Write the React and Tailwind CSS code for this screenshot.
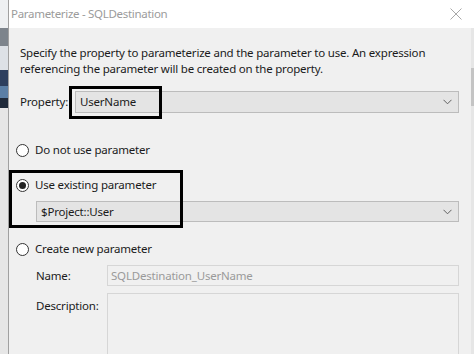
import React from "react";

function Chevron() {
  return (
    <svg width="9" height="6" viewBox="0 0 9 6" className="block">
      <path d="M0.5 0.8 L4.5 4.8 L8.5 0.8" fill="none" stroke="#606060" strokeWidth="1" />
    </svg>
  );
}

function Radio({ checked }) {
  return (
    <div className="w-[13px] h-[13px] rounded-full border border-[#333] bg-white flex items-center justify-center shrink-0">
      {checked && <div className="w-[7px] h-[7px] rounded-full bg-[#222]" />}
    </div>
  );
}

export default function App() {
  return (
    <div className="w-[474px] h-[354px] flex overflow-hidden relative font-['Segoe_UI','Noto_Sans',sans-serif] text-[#1b1b1b]">
      {/* desktop strip */}
      <div className="w-[8px] flex flex-col">
        <div className="h-[28px] bg-[#eef0f2]" />
        <div className="h-[18px] bg-[#7d848c]" />
        <div className="h-[24px] bg-[#dde1e6]" />
        <div className="h-[16px] bg-[#2d3f5e]" />
        <div className="h-[12px] bg-[#5b7fa6]" />
        <div className="h-[10px] bg-[#1f2a3a]" />
        <div className="flex-1 bg-[#e6e6e6]" />
      </div>
      <div className="w-px bg-[#a0a0a0]" />
      {/* dialog */}
      <div className="w-[462px] flex flex-col">
        <div className="h-[28px] bg-white flex items-center justify-between shrink-0">
          <span className="ml-[2px] text-[11.5px] tracking-[-0.3px] text-[#9b9b9b] leading-none">Parameterize - SQLDestination</span>
          <svg width="12" height="12" viewBox="0 0 12 12" className="mr-[9px]">
            <path d="M0.5 0.5 L11.5 11.5 M11.5 0.5 L0.5 11.5" stroke="#a8a8a8" strokeWidth="1" />
          </svg>
        </div>
        <div className="flex-1 bg-[#f0f0f0] flex flex-col text-[11.5px] tracking-[-0.2px] leading-[16px]">
          <p className="ml-[11px] mt-[17px] w-[440px] whitespace-nowrap">
            Specify the property to parameterize and the parameter to use. An expression
            <br />
            referencing the parameter will be created on the property.
          </p>
          <div className="mt-[14px] h-[22px] flex items-center ml-[11px]">
            <span className="w-[55px]">Property:</span>
            <div className="w-[384px] h-[22px] bg-[#e4e4e4] border border-[#bcbcbc] flex items-center justify-between pl-[4px] pr-[6px]">
              <span>UserName</span>
              <Chevron />
            </div>
          </div>
          <div className="mt-[29px] h-[16px] flex items-center ml-[7px] gap-[6px]">
            <Radio />
            <span>Do not use parameter</span>
          </div>
          <div className="mt-[19px] h-[16px] flex items-center ml-[7px] gap-[6px]">
            <Radio checked />
            <span>Use existing parameter</span>
          </div>
          <div className="mt-[8px] ml-[27px] w-[423px] h-[21px] bg-[#e4e4e4] border border-[#bcbcbc] flex items-center justify-between pl-[4px] pr-[6px]">
            <span>$Project::User</span>
            <Chevron />
          </div>
          <div className="mt-[19px] h-[16px] flex items-center ml-[7px] gap-[6px]">
            <Radio />
            <span>Create new parameter</span>
          </div>
          <div className="mt-[8px] ml-[27px] h-[21px] flex items-center">
            <span className="w-[71px]">Name:</span>
            <div className="w-[352px] h-[21px] border border-[#d6d6d6] bg-[#f0f0f0] flex items-center pl-[3px] text-[#9a9a9a]">
              SQLDestination_UserName
            </div>
          </div>
          <div className="mt-[7px] ml-[27px] flex items-start">
            <span className="w-[71px] mt-[5px]">Description:</span>
            <div className="w-[352px] h-[80px] border border-[#d6d6d6] bg-[#f0f0f0]" />
          </div>
        </div>
      </div>
      {/* scrollbar strip */}
      <div className="w-[3px] flex flex-col bg-[#e6e6e6]">
        <div className="h-[28px] bg-white" />
        <div className="h-[40px]" />
        <div className="h-[38px] bg-[#c4c4c4]" />
        <div className="flex-1" />
      </div>
      {/* annotation boxes */}
      <div className="absolute left-[69px] top-[86px] w-[93px] h-[33px] border-[3px] border-black" />
      <div className="absolute left-[9px] top-[170px] w-[174px] h-[58px] border-[3px] border-black" />
    </div>
  );
}
